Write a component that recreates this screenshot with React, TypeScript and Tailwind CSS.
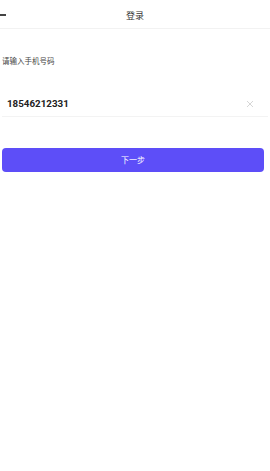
export default function App() {
  return (
    <div
      className="flex h-[471px] w-[270px] flex-col bg-white"
      style={{ fontFamily: '"Noto Sans", "Noto Sans CJK SC", sans-serif' }}
    >
      <header className="relative flex h-[29px] shrink-0 items-center justify-center border-b border-[#f2f2f2]">
        <span className="absolute left-0 top-[14px] block h-[2px] w-[6px] bg-[#444]" />
        <span className="pt-[2px] text-[9px] leading-none text-[#333]">登录</span>
      </header>

      <div className="px-[2px] pt-[29px] text-[7.5px] leading-none text-[#444]">请输入手机号码</div>

      <div className="mx-[2px] mt-[26px] flex h-[25px] items-center justify-between border-b border-[#f3f3f3] pl-[5px] pr-[14px]">
        <span
          className="text-[9.8px] font-bold leading-none text-[#222]"
          style={{ fontFamily: '"Roboto", "Noto Sans", sans-serif' }}
        >
          18546212331
        </span>
        <svg width="8" height="8" viewBox="0 0 8 8" className="text-[#ccc]">
          <path d="M1 1L7 7M7 1L1 7" stroke="currentColor" strokeWidth="0.8" />
        </svg>
      </div>

      <button
        type="button"
        className="mx-[2px] mt-[31px] flex h-[24px] w-[262px] items-center justify-center rounded-[4px] bg-[#5d4ef8] text-[8px] leading-none text-white"
      >
        下一步
      </button>
    </div>
  )
}
